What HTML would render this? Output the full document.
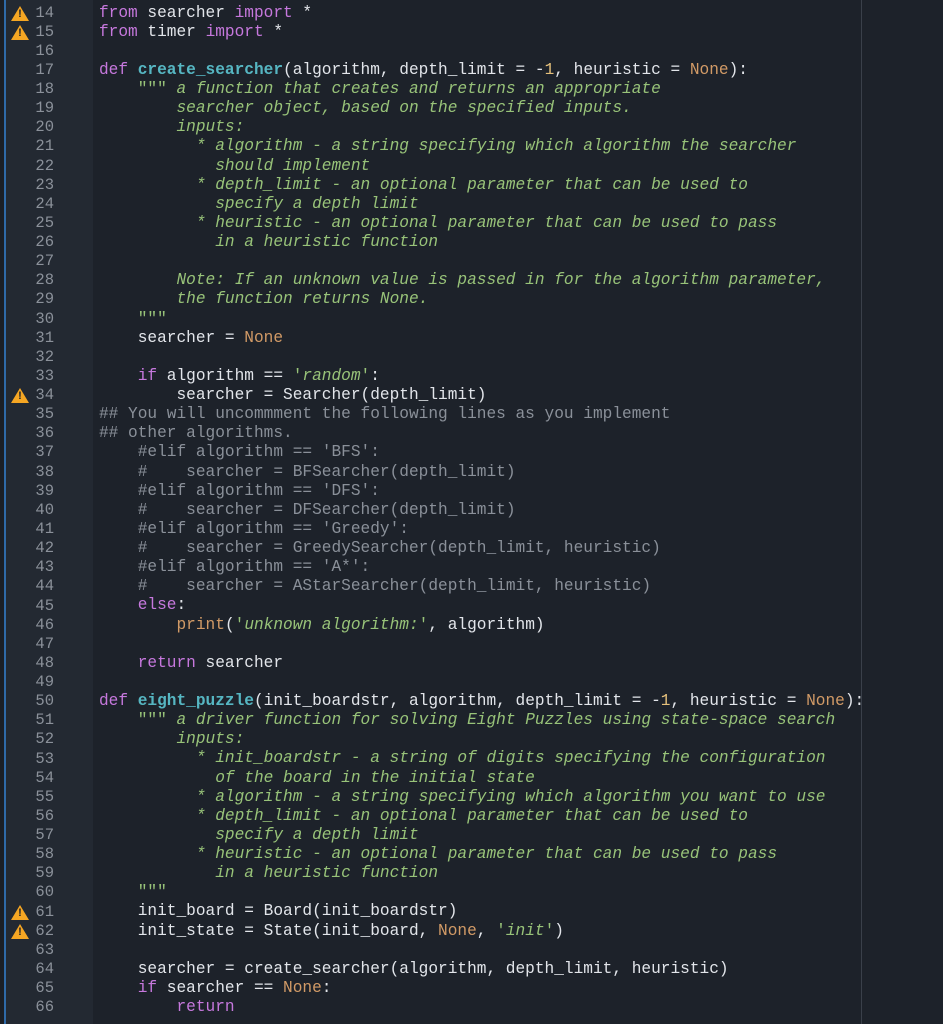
<!DOCTYPE html>
<html><head><meta charset="utf-8"><style>
body{margin:0;width:943px;height:1024px;overflow:hidden;background:#1d222a;position:relative;font-family:"Liberation Mono","DejaVu Sans Mono",monospace;}
#edge{position:absolute;left:0;top:0;width:4px;height:1024px;background:#1b1f26}
#blue{position:absolute;left:4px;top:0;width:2px;height:1024px;background:#2f6aa8}
#gut{position:absolute;left:6px;top:0;width:87px;height:1024px;background:#232932}
#ruler{position:absolute;left:861px;top:0;width:1px;height:1024px;background:#3a404a}
.ln{position:absolute;left:28px;width:26px;text-align:right;color:#8b919a;font-size:15.5px;line-height:19.13px;height:19.13px}
.w{position:absolute;left:11px;width:0;height:0;border-left:9px solid transparent;border-right:9px solid transparent;border-bottom:15px solid #f5a623}
.w:after{content:"!";position:absolute;left:-9px;width:18px;text-align:center;top:2px;font:bold 11px/12px "Liberation Sans",sans-serif;color:#1d222a}
#code{position:absolute;left:99px;top:3.5px;font-size:16.15px;line-height:19.13px;color:#e2e5ea;white-space:pre}
.k{color:#c678dd}.f{color:#56b6c2;font-weight:bold}.d{color:#98c379;font-style:italic}.q{color:#98c379}.n{color:#d19a66}.y{color:#e5c07b}.c{color:#8a9099}.p{color:#d19a66}
</style></head><body>
<div id="edge"></div><div id="blue"></div><div id="gut"></div><div id="ruler"></div>
<div id="nums"></div>
<div id="code"><span class="k">from</span> searcher <span class="k">import</span> *
<span class="k">from</span> timer <span class="k">import</span> *

<span class="k">def</span> <span class="f">create_searcher</span>(algorithm, depth_limit = -<span class="y">1</span>, heuristic = <span class="n">None</span>):
    <span class="q">"""</span><span class="d"> a function that creates and returns an appropriate
        searcher object, based on the specified inputs.
        inputs:
          * algorithm - a string specifying which algorithm the searcher
            should implement
          * depth_limit - an optional parameter that can be used to
            specify a depth limit
          * heuristic - an optional parameter that can be used to pass
            in a heuristic function

        Note: If an unknown value is passed in for the algorithm parameter,
        the function returns None.</span>
    <span class="q">"""</span>
    searcher = <span class="n">None</span>

    <span class="k">if</span> algorithm == <span class="q">'</span><span class="d">random</span><span class="q">'</span>:
        searcher = Searcher(depth_limit)
<span class="c">## You will uncommment the following lines as you implement</span>
<span class="c">## other algorithms.</span>
    <span class="c">#elif algorithm == 'BFS':</span>
    <span class="c">#    searcher = BFSearcher(depth_limit)</span>
    <span class="c">#elif algorithm == 'DFS':</span>
    <span class="c">#    searcher = DFSearcher(depth_limit)</span>
    <span class="c">#elif algorithm == 'Greedy':</span>
    <span class="c">#    searcher = GreedySearcher(depth_limit, heuristic)</span>
    <span class="c">#elif algorithm == 'A*':</span>
    <span class="c">#    searcher = AStarSearcher(depth_limit, heuristic)</span>
    <span class="k">else</span>:
        <span class="p">print</span>(<span class="q">'</span><span class="d">unknown algorithm:</span><span class="q">'</span>, algorithm)

    <span class="k">return</span> searcher

<span class="k">def</span> <span class="f">eight_puzzle</span>(init_boardstr, algorithm, depth_limit = -<span class="y">1</span>, heuristic = <span class="n">None</span>):
    <span class="q">"""</span><span class="d"> a driver function for solving Eight Puzzles using state-space search
        inputs:
          * init_boardstr - a string of digits specifying the configuration
            of the board in the initial state
          * algorithm - a string specifying which algorithm you want to use
          * depth_limit - an optional parameter that can be used to
            specify a depth limit
          * heuristic - an optional parameter that can be used to pass
            in a heuristic function</span>
    <span class="q">"""</span>
    init_board = Board(init_boardstr)
    init_state = State(init_board, <span class="n">None</span>, <span class="q">'</span><span class="d">init</span><span class="q">'</span>)

    searcher = create_searcher(algorithm, depth_limit, heuristic)
    <span class="k">if</span> searcher == <span class="n">None</span>:
        <span class="k">return</span></div>
<script>
var h='';var warn=[14,15,34,61,62];
for(var n=13;n<=66;n++){var t=3.5+(n-14)*19.13;
h+='<div class="ln" style="top:'+t+'px">'+n+'</div>';
if(warn.indexOf(n)>=0)h+='<div class="w" style="top:'+(t+2)+'px"></div>';}
document.getElementById('nums').innerHTML=h;
</script>
</body></html>
